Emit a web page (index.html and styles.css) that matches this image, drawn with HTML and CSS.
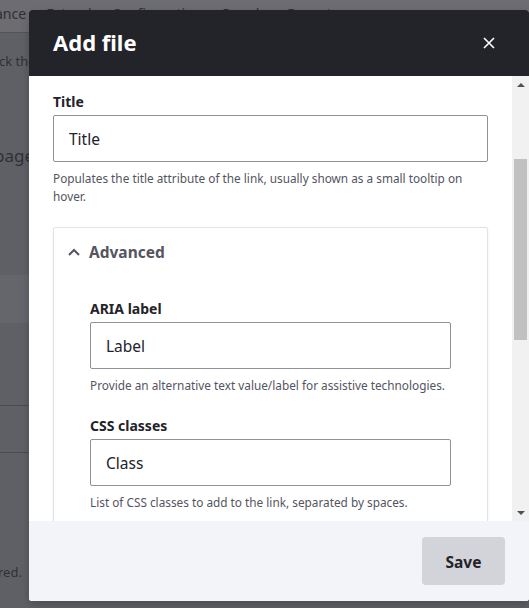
FILE: index.html
```html
<!DOCTYPE html>
<html lang="en">
<head>
    <meta charset="UTF-8"/>
    <meta name="viewport" content="width=device-width, initial-scale=1.0"/>
    <title>Add file</title>
    <link rel="stylesheet" href="styles.css">
</head>
<body>
<div class="page">
    <div class="toolbar">
        <span class="toolbar-item">ance</span>
        <span class="toolbar-item">Extend</span>
        <span class="toolbar-item">Configuration</span>
        <span class="toolbar-item">People</span>
        <span class="toolbar-item">Reports</span>
    </div>
    <p class="page-text first">ck the</p>
    <p class="page-text second">page</p>
    <div class="page-band"></div>
    <div class="page-row"></div>
    <p class="page-text last">red.</p>
</div>

<div class="dialog" role="dialog">
    <div class="dialog-header">
        <h1>Add file</h1>
        <button class="close" type="button" aria-label="Close">
            <svg width="12" height="12" viewBox="0 0 12 12">
                <path d="M1 1 L11 11 M11 1 L1 11" stroke="#fff" stroke-width="1.6" fill="none"/>
            </svg>
        </button>
    </div>

    <div class="dialog-body">
        <div class="dialog-content">
            <div class="field">
                <label for="title">Title</label>
                <input id="title" type="text" value="Title"/>
                <div class="description">Populates the title attribute of the link, usually shown as a small tooltip on hover.</div>
            </div>

            <div class="details">
                <div class="summary">
                    <svg width="12" height="8" viewBox="0 0 12 8">
                        <path d="M1 7 L6 2 L11 7" stroke="#545560" stroke-width="2" fill="none"/>
                    </svg>
                    <span>Advanced</span>
                </div>
                <div class="details-body">
                    <div class="field">
                        <label for="aria">ARIA label</label>
                        <input id="aria" type="text" value="Label"/>
                        <div class="description">Provide an alternative text value/label for assistive technologies.</div>
                    </div>
                    <div class="field">
                        <label for="classes">CSS classes</label>
                        <input id="classes" type="text" value="Class"/>
                        <div class="description">List of CSS classes to add to the link, separated by spaces.</div>
                    </div>
                </div>
            </div>
        </div>

        <div class="scrollbar">
            <div class="arrow up"></div>
            <div class="track"><div class="thumb"></div></div>
            <div class="arrow down"></div>
        </div>
    </div>

    <div class="dialog-footer">
        <button class="button" type="button">Save</button>
    </div>
</div>
</body>
</html>
```

FILE: styles.css
```css
html, body {
    margin: 0;
    height: 100%;
}

body {
    background: #5f6065;
    font-family: "Noto Sans", "Liberation Sans", sans-serif;
    overflow: hidden;
}

.page {
    height: 100%;
    color: #2f3036;
}

.toolbar {
    display: flex;
    height: 32px;
    background: #6c6c71;
    border-bottom: 1px solid #535358;
    overflow: hidden;
    white-space: nowrap;
}

.toolbar-item {
    padding: 4px 20px 0 0;
    font-size: 14px;
    color: #2f3036;
}

.toolbar-item:first-child {
    margin-left: -5px;
}

.page-text {
    margin: 0;
    font-size: 13px;
    white-space: nowrap;
}

.page-text.first {
    padding: 19px 0 0 0;
    margin-left: -1px;
}

.page-text.second {
    margin-top: 74px;
    margin-left: -6px;
    font-size: 17px;
}

.page-band {
    height: 48px;
    margin-top: 108px;
    background: #65666b;
}

.page-row {
    height: 46px;
    margin-top: 82px;
    border-top: 1px solid #4b4c51;
    border-bottom: 1px solid #4b4c51;
}

.page-text.last {
    margin-top: 110px;
    margin-left: -2px;
}

.dialog {
    position: absolute;
    left: 29px;
    top: 10px;
    width: 500px;
    height: 591px;
    display: flex;
    flex-direction: column;
    border-radius: 3px;
    overflow: hidden;
    background: #fff;
    box-shadow: 0 4px 10px rgba(0, 0, 0, 0.2);
}

.dialog-header {
    display: flex;
    align-items: center;
    justify-content: space-between;
    height: 66px;
    padding: 0 34px 0 24px;
    background: #232429;
    flex-shrink: 0;
}

.dialog-header h1 {
    margin: 0;
    color: #fff;
    font-size: 22px;
    font-weight: 700;
    padding-bottom: 2px;
}

.close {
    display: flex;
    padding: 0;
    border: 0;
    background: none;
}

.dialog-body {
    display: flex;
    flex: 1;
    min-height: 0;
}

.dialog-content {
    flex: 1;
    padding: 16px 24px 0 24px;
    overflow: hidden;
}

.field label {
    display: block;
    height: 20px;
    line-height: 20px;
    margin-bottom: 3px;
    font-size: 14px;
    font-weight: 700;
    color: #232429;
}

.field input {
    box-sizing: border-box;
    display: block;
    width: 100%;
    height: 47px;
    margin: 0;
    padding: 0 15px;
    border: 1px solid #919297;
    border-radius: 2px;
    font-family: inherit;
    font-size: 15.5px;
    color: #232429;
}

.description {
    margin-top: 7px;
    font-size: 11.8px;
    line-height: 18px;
    color: #545560;
}

.details {
    margin-top: 22px;
    border: 1px solid #e2e3e8;
    border-radius: 2px;
    box-shadow: 0 1px 3px rgba(0, 0, 0, 0.06);
}

.summary {
    display: flex;
    align-items: center;
    height: 48px;
    padding: 0 0 0 14px;
    font-size: 15.5px;
    font-weight: 700;
    color: #545560;
}

.summary svg {
    margin-right: 9px;
}

.details-body {
    padding: 23px 36px 36px 36px;
}

.details-body .field + .field {
    margin-top: 22px;
}

.scrollbar {
    display: flex;
    flex-direction: column;
    width: 17px;
    background: #f1f1f1;
    flex-shrink: 0;
}

.arrow {
    height: 17px;
    display: flex;
    align-items: center;
    justify-content: center;
}

.arrow::before {
    content: "";
    border-left: 4px solid transparent;
    border-right: 4px solid transparent;
}

.arrow.up::before {
    border-bottom: 4px solid #505050;
}

.arrow.down::before {
    border-top: 4px solid #505050;
}

.track {
    flex: 1;
    padding-top: 66px;
}

.thumb {
    height: 181px;
    margin: 0 2px;
    background: #c1c1c1;
}

.dialog-footer {
    display: flex;
    justify-content: flex-end;
    align-items: center;
    height: 80px;
    padding: 0 24px;
    background: #f3f4f9;
    flex-shrink: 0;
}

.button {
    width: 83px;
    height: 48px;
    padding-top: 3px;
    border: 0;
    border-radius: 4px;
    background: #d3d4d9;
    font-family: inherit;
    font-size: 15.5px;
    font-weight: 700;
    color: #232429;
}
```
